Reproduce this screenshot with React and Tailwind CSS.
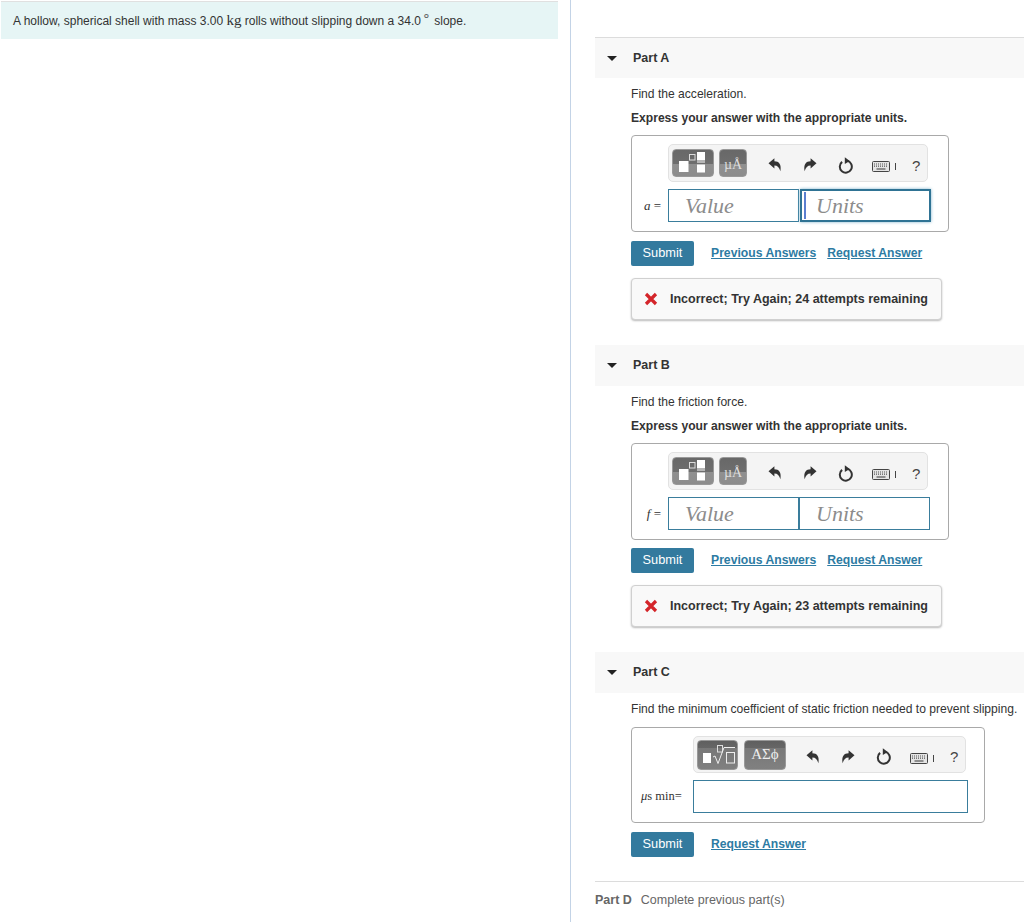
const SANS = { fontFamily: '"Liberation Sans", Arial, sans-serif' }
const SERIF = { fontFamily: '"Liberation Serif", serif' }

const UndoIcon = ({ flip }) => (
  <svg width="14" height="14" viewBox="0 0 14 14" style={flip ? { transform: 'scaleX(-1)' } : { marginLeft: 1 }}>
    <path d="M0.5 5.2 L6.4 0.2 V3.2 C11 3.2 13.6 6.4 12.4 13.2 C11.2 9.6 9.6 7.6 6.4 7.6 V10.4 Z" fill="#333" />
  </svg>
)

const ResetIcon = () => (
  <svg width="16" height="17" viewBox="0 0 16 17">
    <path d="M9.6 3.9 A6 6 0 1 1 4.1 4.9" fill="none" stroke="#333" strokeWidth="2" />
    <path d="M6.8 0.2 L11.8 3.9 L6.8 7 Z" fill="#333" />
  </svg>
)

const KeyboardIcon = () => (
  <svg width="18" height="11" viewBox="0 0 18 11">
    <rect x="0.5" y="0.5" width="17" height="10" rx="1" fill="#e4e4e4" stroke="#444" />
    <path d="M2 3H16M2 5.2H16" stroke="#555" strokeWidth="1.2" strokeDasharray="1 1" />
    <path d="M4.5 8H13.5" stroke="#555" strokeWidth="1.2" />
  </svg>
)

const TemplateIcon = () => (
  <svg width="42" height="28" viewBox="0 0 42 28">
    <rect x="7" y="12" width="9.5" height="11" fill="#fff" />
    <rect x="17.5" y="5.5" width="5.5" height="5.5" fill="none" stroke="#ddd" />
    <rect x="25" y="3" width="8" height="8.5" fill="#fff" />
    <rect x="25" y="12.5" width="8" height="1" fill="#fff" />
    <rect x="25" y="15.5" width="8" height="8" fill="#fff" />
  </svg>
)

const RadicalIcon = () => (
  <svg width="41" height="30" viewBox="0 0 41 30">
    <rect x="6" y="13" width="8" height="10" fill="#fff" />
    <rect x="20.5" y="5.5" width="5" height="6.5" fill="none" stroke="#ddd" />
    <path d="M16 17 L18 16 L21 23.5 L27 7.5 H38" fill="none" stroke="#eee" strokeWidth="1" />
    <rect x="29.5" y="12.5" width="8" height="10.5" fill="none" stroke="#eee" />
  </svg>
)

const Toolbar = ({ wide }) => (
  <div className={`flex items-center rounded-[5px] border border-[#e2e2e2] bg-[#f4f4f4] pl-[3px] ${wide ? 'h-[37px] w-[273px]' : 'h-[38px] w-[260px]'}`}>
    {wide ? (
      <>
        <div className="h-[30px] w-[41px] rounded-[4px] border border-[#999] bg-[linear-gradient(#5f5f5f_0,#666_25%,#787878_25%,#808080_100%)]">
          <div className="-m-px"><RadicalIcon /></div>
        </div>
        <div className="ml-[6px] flex h-[30px] w-[42px] items-center justify-center rounded-[4px] border border-[#999] bg-[linear-gradient(#5f5f5f_0,#666_25%,#787878_25%,#808080_100%)] text-[15px] leading-none text-[#eee]" style={SERIF}>
          ΑΣϕ
        </div>
      </>
    ) : (
      <>
        <div className="h-[28px] w-[42px] rounded-[4px] border border-[#999] bg-[linear-gradient(#686868_0,#6e6e6e_55%,#909090_55%,#8c8c8c_100%)]">
          <div className="-m-px"><TemplateIcon /></div>
        </div>
        <div className="ml-[5px] flex h-[28px] w-[28px] items-center justify-center rounded-[4px] border border-[#999] bg-[linear-gradient(#686868_0,#6e6e6e_55%,#909090_55%,#8c8c8c_100%)] pt-[3px] text-[14px] leading-none text-[#ddd]" style={SERIF}>
          µÅ
        </div>
      </>
    )}
    <div className={`mt-[4px] flex items-center ${wide ? 'ml-[8px]' : 'ml-[9px]'}`}>
      <div className="flex w-[36px] justify-center"><UndoIcon /></div>
      <div className="flex w-[36px] justify-center"><UndoIcon flip /></div>
      <div className="flex w-[36px] justify-center"><ResetIcon /></div>
      <div className="ml-[8px] mt-[3px] flex items-center">
        <KeyboardIcon />
        <span className="ml-[5px] h-[7px] w-px bg-[#444]" />
      </div>
      <span className="ml-[16px] text-[15px] leading-none text-[#444]" style={SANS}>?</span>
    </div>
  </div>
)

const AnswerBox = ({ label, focused }) => (
  <div className="flex h-[97px] w-[318px] flex-col rounded-[4px] border border-[#a9a9a9] bg-white pl-[36px] pt-[8px]">
    <Toolbar />
    <div className="-ml-[36px] mt-[7px] flex items-center">
      <span className="w-[36px] pr-[7px] text-right text-[13px] text-[#333]" style={SERIF}>
        <i>{label}</i> =
      </span>
      <div className="flex h-[33px] w-[131px] items-center border border-[#3a7d9c] pl-[16px] text-[22px] italic text-[#8c8c8c]" style={SERIF}>
        Value
      </div>
      {focused ? (
        <div className="ml-px flex h-[33px] w-[131px] items-center border-2 border-[#2f7394] pl-[2px] text-[22px] italic text-[#8c8c8c] shadow-[0_0_3px_#7fb4cc]" style={SERIF}>
          <span className="mr-[10px] h-[27px] w-[2px] bg-[#5b7fd0]" />
          Units
        </div>
      ) : (
        <div className="flex h-[33px] w-[131px] items-center border border-[#3a7d9c] pl-[16px] text-[22px] italic text-[#8c8c8c]" style={SERIF}>
          Units
        </div>
      )}
    </div>
  </div>
)

const PartHeader = ({ name, border }) => (
  <div className={`flex h-[41px] items-center bg-[#f8f8f8] pl-[12px] ${border ? 'border-t border-[#dcdcdc]' : ''}`}>
    <span className="h-0 w-0 border-x-[5px] border-t-[5px] border-x-transparent border-t-[#222]" />
    <span className="ml-[16px] text-[12.5px] font-bold text-[#333]">{name}</span>
  </div>
)

const Actions = ({ links, top = 'mt-[9px]' }) => (
  <div className={`flex items-center ${top}`}>
    <button className="h-[25px] w-[63px] rounded-[2px] bg-[#337a9e] pb-px text-[12.8px] text-white">Submit</button>
    <div className="ml-[17px] flex gap-[11px]">
      {links.map((l) => (
        <a key={l} className="text-[12.2px] font-bold text-[#2d7ba3] underline">{l}</a>
      ))}
    </div>
  </div>
)

const Feedback = ({ count }) => (
  <div className="mt-[12px] flex h-[42px] w-[311px] items-center rounded-[4px] border border-[#d0d0d0] bg-[#f9f9f9] pl-[12px] shadow-[0_1px_2px_#bbb]">
    <svg width="14" height="14" viewBox="0 0 14 14">
      <path d="M2 2 L12 12 M12 2 L2 12" stroke="#d4252a" strokeWidth="3.2" />
    </svg>
    <span className="ml-[12px] text-[12.5px] font-bold text-[#333]">Incorrect; Try Again; {count} attempts remaining</span>
  </div>
)

const Express = () => (
  <div className="mt-[7px] h-[17px] text-[12.1px] font-bold leading-[17px] text-[#333]">Express your answer with the appropriate units.</div>
)

const App = () => {
  return (
    <div className="flex h-[922px] w-[1024px] overflow-hidden bg-white" style={SANS}>
      <div className="w-[570px] shrink-0 pl-px pt-px">
        <div className="flex h-[38px] w-[557px] items-center border-t border-[#e0e0e0] bg-[#e6f5f5] pl-[12px] text-[12px] text-[#333]">
          A hollow, spherical shell with mass 3.00&nbsp;
          <span className="text-[15px]" style={SERIF}>kg</span>
          &nbsp;rolls without slipping down a 34.0
          <span className="relative -top-[5px] ml-px text-[14px] leading-none text-[#666]" style={SERIF}>∘</span>
          &nbsp;slope.
        </div>
      </div>

      <div className="flex-1 border-l border-[#c3d3e6] pl-[24px] pt-[37px]">
        <PartHeader name="Part A" border />
        <div className="pl-[36px]">
          <div className="mt-[8px] h-[17px] text-[12.1px] leading-[17px] text-[#333]">Find the acceleration.</div>
          <Express />
          <div className="mt-[8px]"><AnswerBox label="a" focused /></div>
          <Actions links={['Previous Answers', 'Request Answer']} />
          <Feedback count={24} />
        </div>

        <div className="mt-[25px]"><PartHeader name="Part B" /></div>
        <div className="pl-[36px]">
          <div className="mt-[8px] h-[17px] text-[12.1px] leading-[17px] text-[#333]">Find the friction force.</div>
          <Express />
          <div className="mt-[8px]"><AnswerBox label="f" /></div>
          <Actions links={['Previous Answers', 'Request Answer']} top="mt-[8px]" />
          <Feedback count={23} />
        </div>

        <div className="mt-[25px]"><PartHeader name="Part C" /></div>
        <div className="pl-[36px]">
          <div className="mt-[8px] h-[17px] whitespace-nowrap text-[12.1px] leading-[17px] text-[#333]">Find the minimum coefficient of static friction needed to prevent slipping.</div>
          <div className="mt-[9px] flex h-[96px] w-[354px] flex-col rounded-[4px] border border-[#a9a9a9] bg-white pl-[61px] pt-[8px]">
            <Toolbar wide />
            <div className="-ml-[61px] mt-[7px] flex items-center">
              <span className="w-[61px] pl-[9px] text-[12.5px] text-[#333]" style={SERIF}>
                <i>μ</i>s min=
              </span>
              <div className="h-[33px] w-[275px] border border-[#3a7d9c]" />
            </div>
          </div>
          <Actions links={['Request Answer']} />
        </div>

        <div className="mt-[24px] flex h-[38px] items-center border-t border-[#dcdcdc] text-[12.5px] text-[#666]">
          <span className="font-bold">Part D</span>
          <span className="ml-[9px]">Complete previous part(s)</span>
        </div>
      </div>
    </div>
  )
}

export default App
